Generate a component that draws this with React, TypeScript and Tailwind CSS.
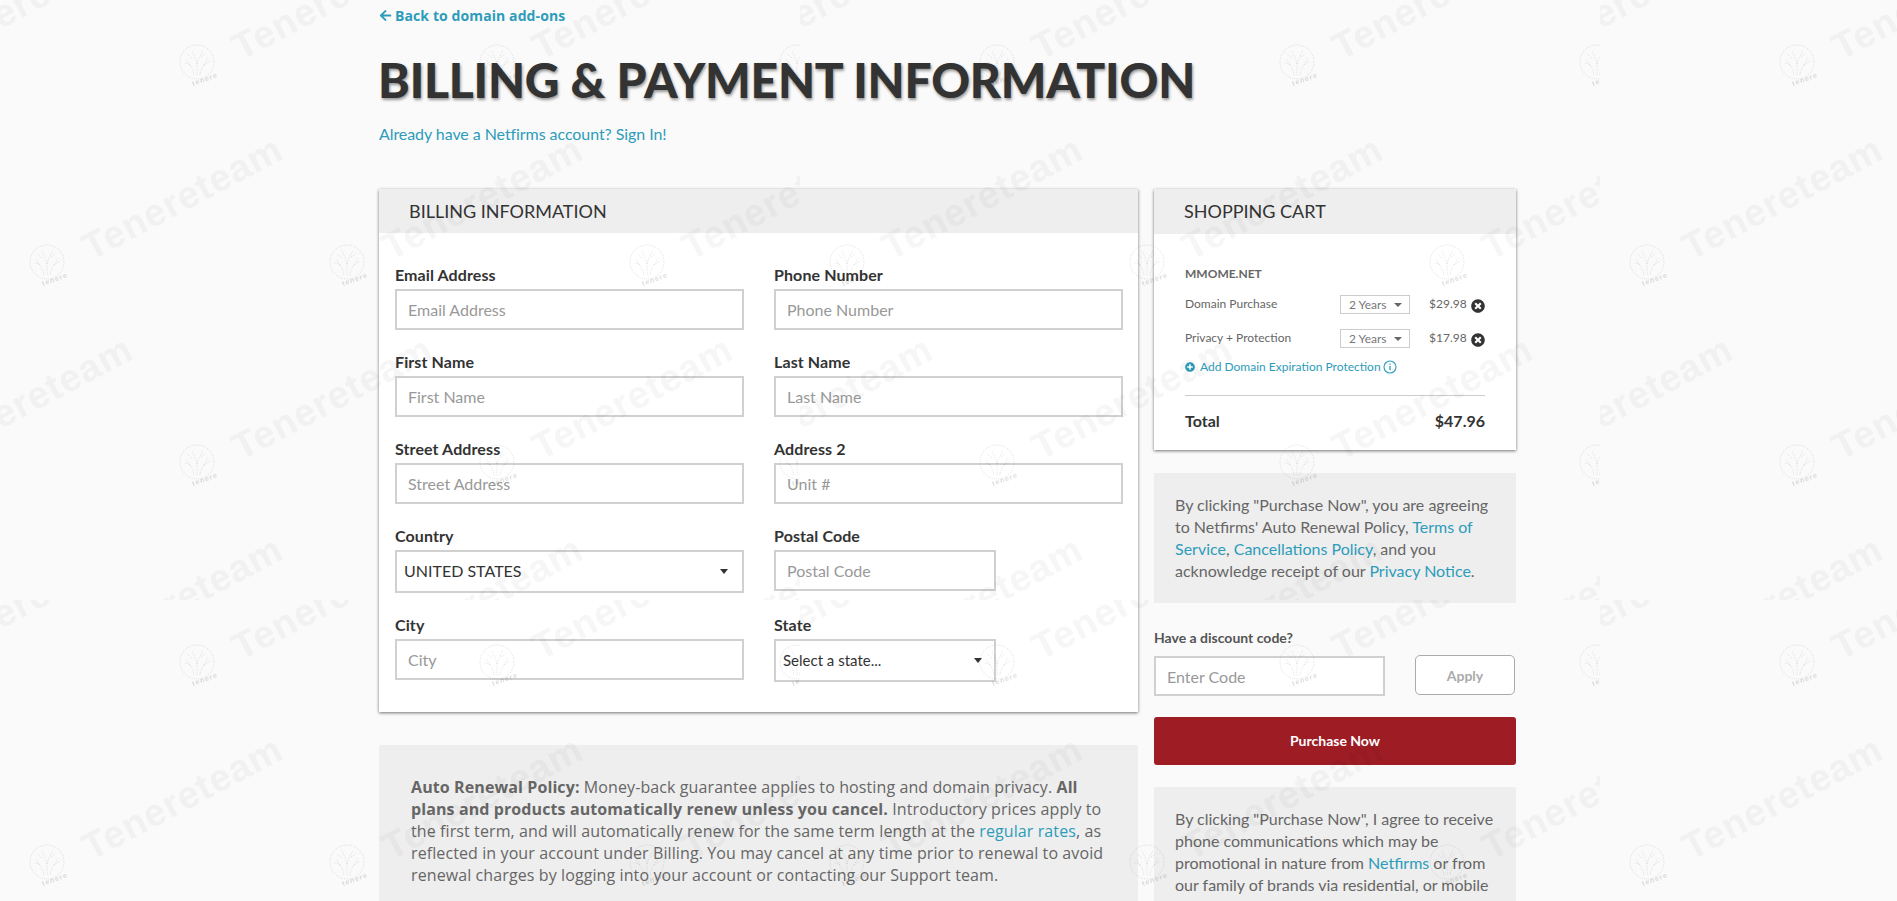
import { FaArrowLeft, FaPlusCircle, FaTimesCircle } from "react-icons/fa";

const LOGOS = [
  [197, 62], [497, 62], [797, 62],
  [47, 262], [347, 262], [647, 262],
  [197, 462], [497, 462], [797, 462],
];
const WORDS = [
  [-59, 61], [241, 61], [541, 61],
  [91, 261], [391, 261], [691, 261],
  [-59, 461], [241, 461], [541, 461],
  [91, 661], [391, 661], [691, 661],
];

function WatermarkLogo({ x, y }: { x: number; y: number }) {
  return (
    <g transform={`translate(${x} ${y})`} fill="none" stroke="rgba(0,0,0,0.13)" strokeWidth="0.8" strokeDasharray="1 1.2">
      <circle r="17" />
      <path d="M0 13V2M-3 13C-4 6-7 3-11-3M3 13C4 6 7 3 11-4M0 2C-1-3-3-6-5-11M0 2C1-3 4-7 6-12M-7 3C-9 1-12 1-13 1M7 3C9 1 12 0 13-1M-5-4C-7-6-9-7-10-8M4-5C6-6 8-8 9-9" />
      <text
        x="0"
        y="0"
        transform="translate(-4 24) rotate(-20)"
        fill="rgba(0,0,0,0.14)"
        stroke="none"
        fontFamily="'Liberation Sans', sans-serif"
        fontWeight="700"
        fontSize="7"
        letterSpacing="1"
      >
        tenere
      </text>
    </g>
  );
}

function Watermark() {
  return (
    <svg className="pointer-events-none absolute inset-0 z-10 h-full w-full">
      <defs>
        <pattern id="wm" width="800" height="600" patternUnits="userSpaceOnUse">
          {LOGOS.map(([x, y]) => (
            <WatermarkLogo key={`${x}-${y}`} x={x} y={y} />
          ))}
          {WORDS.map(([x, y]) => (
            <text
              key={`${x}-${y}`}
              transform={`translate(${x} ${y}) rotate(-28)`}
              fill="rgba(0,0,0,0.035)"
              fontFamily="'Liberation Sans', sans-serif"
              fontWeight="700"
              fontSize="38"
              letterSpacing="1"
            >
              Tenereteam
            </text>
          ))}
        </pattern>
      </defs>
      <rect width="100%" height="100%" fill="url(#wm)" />
    </svg>
  );
}

function Caret({ size = "md" }: { size?: "md" | "sm" }) {
  return size === "md" ? (
    <span className="h-0 w-0 border-x-[4.5px] border-t-[5px] border-x-transparent border-t-[#333]" />
  ) : (
    <span className="h-0 w-0 border-x-[4px] border-t-[4px] border-x-transparent border-t-[#666]" />
  );
}

function Field({ label, placeholder, w = "w-full" }: { label: string; placeholder: string; w?: string }) {
  return (
    <div>
      <div className="mb-[3px] h-[21px] text-[16px] font-bold leading-[19px] tracking-[0.1px] text-[#333]">{label}</div>
      <input
        placeholder={placeholder}
        className={`${w} block h-[41px] border-2 border-[#d0d0d0] bg-white px-[11px] text-[16px] outline-none placeholder:text-[#999]`}
      />
    </div>
  );
}

function SelectField({ label, value, w, cls }: { label: string; value: string; w: string; cls: string }) {
  return (
    <div>
      <div className="mb-[3px] h-[21px] text-[16px] font-bold leading-[19px] tracking-[0.1px] text-[#333]">{label}</div>
      <div className={`${w} ${cls} flex h-[43px] items-center justify-between border-2 border-[#d0d0d0] bg-white pl-[7px] text-[#333]`}>
        <span className="-mt-px">{value}</span>
        <Caret />
      </div>
    </div>
  );
}

function CartRow({ name, price, className }: { name: string; price: string; className: string }) {
  return (
    <div className={`flex h-[19px] items-center text-[12px] text-[#666] ${className}`}>
      <span className="-mt-[2px] w-[155px]">{name}</span>
      <div className="flex h-[19px] w-[70px] items-center justify-between border border-[#ccc] pl-[8px] pr-[7px] text-[#777]">
        <span>2 Years</span>
        <Caret size="sm" />
      </div>
      <span className="-mt-[2px] ml-[19px] w-[37px]">{price}</span>
      <FaTimesCircle className="ml-[5px] mt-[2px] text-[14px] text-[#333]" />
    </div>
  );
}

const link = "text-[#2d9cbb]";

export default function App() {
  return (
    <div className="relative h-screen overflow-hidden bg-[#fafafa] font-['Lato',sans-serif]">
      <div className="ml-[379px] w-[1137px]">
        <div className="flex h-[26px] items-end font-['Open_Sans',sans-serif] text-[14px] font-bold text-[#2d9cbb]">
          <span className="flex items-center gap-[3px]">
            <FaArrowLeft className="text-[13px]" />
            <span className="tracking-[0.1px]">Back to domain add-ons</span>
          </span>
        </div>
        <h1 className="mt-[25px] h-[58px] -translate-x-px text-[48px] font-black leading-[58px] tracking-[-0.22px] text-[#333] [text-shadow:1px_2px_3px_rgba(0,0,0,0.4)]">
          BILLING &amp; PAYMENT INFORMATION
        </h1>
        <div className={`mt-[14px] h-[22px] text-[16px] leading-[22px] tracking-[-0.07px] ${link}`}>
          Already have a Netfirms account? Sign In!
        </div>

        <div className="mt-[44px] flex items-start gap-[16px]">
          <div className="w-[759px]">
            <section className="bg-white shadow-[0_1px_3px_rgba(0,0,0,0.55)]">
              <h2 className="h-[44px] bg-[#eee] pl-[30px] text-[18px] leading-[44px] text-[#333]">BILLING INFORMATION</h2>
              <div className="grid grid-cols-[349px_349px] gap-x-[30px] gap-y-[22px] pb-[30px] pl-[16px] pt-[32px]">
                <Field label="Email Address" placeholder="Email Address" />
                <Field label="Phone Number" placeholder="Phone Number" />
                <Field label="First Name" placeholder="First Name" />
                <Field label="Last Name" placeholder="Last Name" />
                <Field label="Street Address" placeholder="Street Address" />
                <Field label="Address 2" placeholder="Unit #" />
                <SelectField label="Country" value="UNITED STATES" w="w-full" cls="pr-[14px] text-[16px]" />
                <Field label="Postal Code" placeholder="Postal Code" w="w-[222px]" />
                <Field label="City" placeholder="City" />
                <SelectField label="State" value="Select a state..." w="w-[222px]" cls="pr-[12px] text-[15px]" />
              </div>
            </section>

            <section className="mt-[33px] h-[200px] rounded-[2px] bg-[#eee] px-[32px] pt-[31px] font-['Open_Sans',sans-serif] text-[16px] leading-[22px] tracking-[0.1px] text-[#666]">
              <strong>Auto Renewal Policy:</strong> Money-back guarantee applies to hosting and domain privacy.{" "}
              <strong>All plans and products automatically renew unless you cancel.</strong> Introductory prices apply to
              the first term, and will automatically renew for the same term length at the{" "}
              <span className={link}>regular rates</span>, as reflected in your account under Billing. You may cancel at
              any time prior to renewal to avoid renewal charges by logging into your account or contacting our Support
              team.
            </section>
          </div>

          <div className="w-[362px]">
            <section className="bg-white shadow-[0_1px_3px_rgba(0,0,0,0.55)]">
              <h2 className="h-[45px] bg-[#eee] pl-[30px] text-[18px] leading-[45px] text-[#333]">SHOPPING CART</h2>
              <div className="px-[31px] pb-[17px] pt-[31px]">
                <div className="h-[18px] text-[12px] font-bold leading-[18px] text-[#666]">MMOME.NET</div>
                <CartRow name="Domain Purchase" price="$29.98" className="mt-[12px]" />
                <CartRow name="Privacy + Protection" price="$17.98" className="mt-[15px]" />
                <div className={`mt-[11px] flex h-[16px] items-center text-[12px] ${link}`}>
                  <FaPlusCircle className="mr-[5px] text-[10px]" />
                  Add Domain Expiration Protection
                  <svg viewBox="0 0 14 14" className="ml-[2px] h-[14px] w-[14px]" fill="none" stroke="currentColor">
                    <circle cx="7" cy="7" r="6" strokeWidth="1.1" />
                    <path d="M7 6v4.2M7 3.6v1.2" strokeWidth="1.3" />
                  </svg>
                </div>
                <div className="mt-[20px] border-t border-[#ccc]" />
                <div className="mt-[13px] flex h-[24px] items-center justify-between pb-px text-[16px] font-bold text-[#333]">
                  <span>Total</span>
                  <span>$47.96</span>
                </div>
              </div>
            </section>

            <section className="mt-[23px] bg-[#eee] pb-[21px] pl-[21px] pr-[20px] pt-[21px] text-[16px] leading-[22px] text-[#666]">
              By clicking "Purchase Now", you are agreeing to Netfirms' Auto Renewal Policy,{" "}
              <span className={link}>Terms of Service</span>, <span className={link}>Cancellations Policy</span>, and you
              acknowledge receipt of our <span className={link}>Privacy Notice</span>.
            </section>

            <div className="mt-[26px] h-[18px] text-[14px] font-bold leading-[18px] text-[#555]">Have a discount code?</div>
            <div className="mt-[8px] flex items-start justify-between">
              <input
                placeholder="Enter Code"
                className="mt-px block h-[40px] w-[231px] border-2 border-[#d0d0d0] bg-white px-[11px] text-[16px] outline-none placeholder:text-[#999]"
              />
              <button className="mr-px h-[40px] w-[100px] rounded-[5px] border border-[#aaa] bg-white text-[14px] font-bold text-[#aaa]">
                Apply
              </button>
            </div>
            <button className="mt-[21px] block h-[48px] w-full rounded-[3px] bg-[#9e1c24] pb-[2px] text-[14px] font-bold text-white">
              Purchase Now
            </button>

            <section className="mt-[22px] h-[200px] rounded-[2px] bg-[#eee] pl-[21px] pr-[20px] pt-[21px] text-[16px] leading-[22px] text-[#666]">
              By clicking "Purchase Now", I agree to receive phone communications which may be promotional in nature from{" "}
              <span className={link}>Netfirms</span> or from our family of brands via residential, or mobile
            </section>
          </div>
        </div>
      </div>
      <Watermark />
    </div>
  );
}
